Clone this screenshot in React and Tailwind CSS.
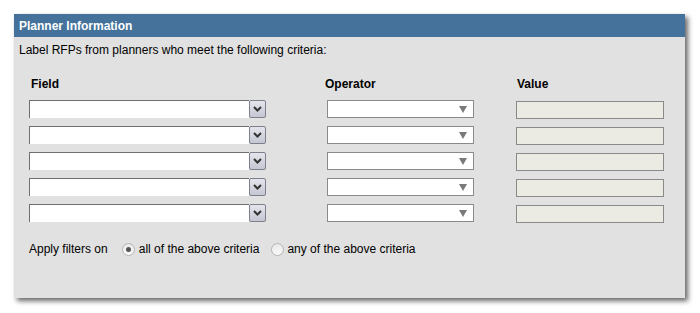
import React from "react";

const rows = [0, 1, 2, 3, 4];

const FieldSelect = () => (
  <div className="flex h-[18px] w-[237px] items-stretch">
    <div className="flex-1 border-l border-t border-[#6f6f6f] bg-white" />
    <div className="flex w-[17px] items-center justify-center rounded-[2px] border border-[#7d7f8c] bg-gradient-to-b from-[#e4e5ec] to-[#c4c6d2]">
      <svg width="9" height="6" viewBox="0 0 9 6">
        <path d="M1 1 L4.5 4.5 L8 1" fill="none" stroke="#333" strokeWidth="2" />
      </svg>
    </div>
  </div>
);

const OperatorSelect = () => (
  <div className="flex h-[18px] w-[147px] items-center justify-end border border-[#8a8a8a] bg-white pr-[6px]">
    <svg width="8" height="7" viewBox="0 0 8 7">
      <path d="M0 0 H8 L4 7 Z" fill="#7a7a7a" />
    </svg>
  </div>
);

const Radio = ({ checked }) => (
  <span className="flex h-[13px] w-[13px] items-center justify-center rounded-full border border-[#b4b4b4] bg-gradient-to-b from-[#e8e8e8] to-[#fafafa]">
    {checked && <span className="h-[5px] w-[5px] rounded-full bg-[#555]" />}
  </span>
);

export default function App() {
  return (
    <div
      className="h-[313px] w-[700px] bg-white pl-[14px] pt-[14px] text-[12px] text-black"
      style={{ fontFamily: '"Liberation Sans", Arial, sans-serif' }}
    >
      <div className="flex h-[284px] w-[671px] flex-col bg-[#e1e1e1] shadow-[3px_3px_5px_rgba(0,0,0,0.6)]">
        {/* Header */}
        <div className="flex h-[23px] items-center bg-[#44729a] px-[5px] font-bold text-white">
          Planner Information
        </div>

        <div className="px-[5px] pt-[6px] leading-[14px]">
          Label RFPs from planners who meet the following criteria:
        </div>

        {/* Criteria grid */}
        <div className="ml-[15px] mt-[20px] grid grid-cols-[237px_147px_148px]">
          <div className="pl-[2px] font-bold leading-[14px]">Field</div>
          <div className="ml-[59px] font-bold leading-[14px]">Operator</div>
          <div className="ml-[103px] pl-[1px] font-bold leading-[14px]">Value</div>
        </div>

        <div className="ml-[15px] mt-[9px] flex flex-col gap-[8px]">
          {rows.map((r) => (
            <div key={r} className="flex h-[18px] items-start">
              <FieldSelect />
              <div className="ml-[61px]">
                <OperatorSelect />
              </div>
              <div className="ml-[42px] mt-[1px] h-[18px] w-[148px] shrink-0 border border-[#8a8a8a] bg-[#ebebe4]" />
            </div>
          ))}
        </div>

        {/* Apply filters */}
        <div className="ml-[15px] mt-[20px] flex items-center leading-[14px]">
          <span>Apply filters on</span>
          <span className="ml-[14px] flex items-center gap-[4px]">
            <Radio checked />
            <span>all of the above criteria</span>
          </span>
          <span className="ml-[12px] flex items-center gap-[3px]">
            <Radio />
            <span>any of the above criteria</span>
          </span>
        </div>
      </div>
    </div>
  );
}
